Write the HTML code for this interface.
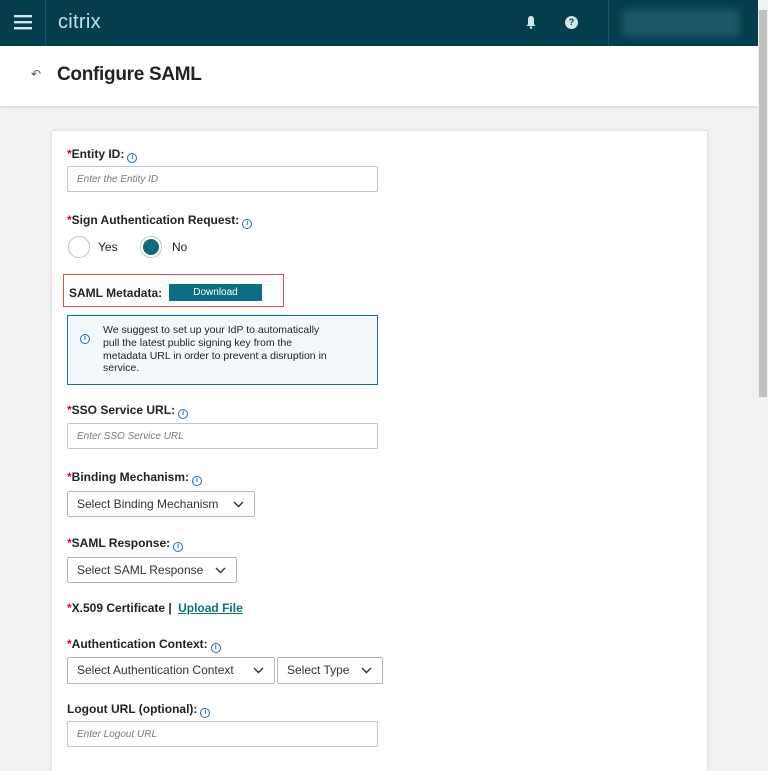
<!DOCTYPE html>
<html><head><meta charset="utf-8"><style>
*{box-sizing:border-box;margin:0;padding:0}
body{width:768px;height:758px;overflow:hidden;background:#f1f1f1;font-family:"Liberation Sans",sans-serif;position:relative;color:#222}
.a{position:absolute}
.hdr{left:0;top:0;width:758px;height:46px;background:#043d4b}
.bar{left:0;top:46px;width:758px;height:61px;background:#fff;border-bottom:1px solid #ddd;box-shadow:0 1px 2px rgba(0,0,0,.08)}
.card{left:52px;top:131px;width:655px;height:640px;background:#fff;box-shadow:0 0 3px rgba(0,0,0,.15)}
.lbl{font-size:12px;font-weight:bold;color:#222;white-space:nowrap;line-height:14px}
.lbl .s{color:#c8102e}
.inp{border:1px solid #c4c4c4;border-radius:2px;background:#fff;font-size:10px;font-style:italic;color:#777;padding-left:9px;line-height:26px}
.sel{border:1px solid #b5b5b5;border-radius:2px;background:#fff;font-size:12px;color:#333;padding-left:9px;line-height:24px;white-space:nowrap}
.sel svg{position:absolute;right:10px;top:9px}
.ii{display:inline-block;width:10px;height:10px;border:1.2px solid #1f6da0;border-radius:50%;vertical-align:-1px;margin-left:3px;font-size:7px;color:#1f6da0;text-align:center;line-height:8px;font-weight:bold;font-style:normal}
.lbl .ii{vertical-align:-1px}
</style></head><body>
<div class="a hdr"></div>
<svg class="a" style="left:14px;top:15px" width="18" height="15"><rect y="0" width="18" height="2.4" fill="#cfe8ec"/><rect y="6" width="18" height="2.4" fill="#cfe8ec"/><rect y="12" width="18" height="2.4" fill="#cfe8ec"/></svg>
<div class="a" style="left:45px;top:0;width:1px;height:46px;background:#1d5563"></div>
<div class="a" style="left:58px;top:11px;font-size:20px;color:#bfe3e8;letter-spacing:0.3px;font-weight:300">citrix</div>
<svg class="a" style="left:525px;top:15px" width="12" height="14"><path d="M6 1C3.5 1 3 3 3 5v4L1.5 11h9L9 9V5C9 3 8.5 1 6 1z" fill="#cfe8ec"/><circle cx="6" cy="12.5" r="1.3" fill="#cfe8ec"/></svg>
<div class="a" style="left:565px;top:16px;width:13px;height:13px;border-radius:50%;background:#cfe8ec;color:#043d4b;font-size:9px;font-weight:bold;text-align:center;line-height:13px">?</div>
<div class="a" style="left:608px;top:0;width:1px;height:46px;background:#1d5563"></div>
<div class="a" style="left:622px;top:9px;width:118px;height:28px;background:#1b5866;filter:blur(4px);border-radius:4px"></div>
<div class="a bar"></div>
<div class="a" style="left:31px;top:67px;font-size:12px;color:#555">↶</div>
<div class="a" style="left:57px;top:64px;font-size:19px;font-weight:bold;color:#222;letter-spacing:-0.3px">Configure SAML</div>
<div class="a" style="left:758px;top:0;width:10px;height:758px;background:#f1f1f1"></div>
<div class="a" style="left:759px;top:10px;width:8px;height:387px;background:#c1c1c1"></div>
<div class="a card"></div>

<div class="a lbl" style="left:67px;top:147px"><span class="s">*</span>Entity ID:<span class="ii">i</span></div>
<div class="a inp" style="left:67px;top:166px;width:311px;height:26px">Enter the Entity ID</div>

<div class="a lbl" style="left:67px;top:213px"><span class="s">*</span>Sign Authentication Request:<span class="ii">i</span></div>
<div class="a" style="left:68px;top:236px;width:22px;height:22px;border:1px solid #c4c4c4;border-radius:50%;background:#fff"></div>
<div class="a" style="left:98px;top:240px;font-size:12px">Yes</div>
<div class="a" style="left:140px;top:236px;width:22px;height:22px;border:1px solid #c4c4c4;border-radius:50%;background:#fff;padding:2px"><div style="width:16px;height:16px;border-radius:50%;background:#0d6b7b"></div></div>
<div class="a" style="left:172px;top:240px;font-size:12px">No</div>

<div class="a" style="left:63px;top:274px;width:221px;height:33px;border:1.5px solid #e0484f"></div>
<div class="a lbl" style="left:69px;top:286px">SAML Metadata:</div>
<div class="a" style="left:169px;top:284px;width:93px;height:17px;background:#0b7083;color:#fff;font-size:10px;text-align:center;line-height:17px">Download</div>

<div class="a" style="left:67px;top:315px;width:311px;height:70px;border:1px solid #1f6da0;background:#f2f9fd"></div>
<div class="a" style="left:80px;top:326px"><span class="ii" style="margin:0">i</span></div>
<div class="a" style="left:103px;top:324px;font-size:10.5px;line-height:12.8px;color:#222;width:270px;white-space:nowrap">We suggest to set up your IdP to automatically<br>pull the latest public signing key from the<br>metadata URL in order to prevent a disruption in<br>service.</div>

<div class="a lbl" style="left:67px;top:403px"><span class="s">*</span>SSO Service URL:<span class="ii">i</span></div>
<div class="a inp" style="left:67px;top:423px;width:311px;height:26px">Enter SSO Service URL</div>

<div class="a lbl" style="left:67px;top:470px"><span class="s">*</span>Binding Mechanism:<span class="ii">i</span></div>
<div class="a sel" style="left:67px;top:491px;width:188px;height:26px">Select Binding Mechanism<svg width="11" height="7"><path d="M1 1l4.5 4.5L10 1" fill="none" stroke="#333" stroke-width="1.4"/></svg></div>

<div class="a lbl" style="left:67px;top:536px"><span class="s">*</span>SAML Response:<span class="ii">i</span></div>
<div class="a sel" style="left:67px;top:557px;width:170px;height:26px">Select SAML Response<svg width="11" height="7"><path d="M1 1l4.5 4.5L10 1" fill="none" stroke="#333" stroke-width="1.4"/></svg></div>

<div class="a lbl" style="left:67px;top:601px"><span class="s">*</span>X.509 Certificate | <span style="color:#0b7083;text-decoration:underline;margin-left:3px">Upload File</span></div>

<div class="a lbl" style="left:67px;top:637px"><span class="s">*</span>Authentication Context:<span class="ii">i</span></div>
<div class="a sel" style="left:67px;top:657px;width:208px;height:27px;line-height:25px">Select Authentication Context<svg width="11" height="7"><path d="M1 1l4.5 4.5L10 1" fill="none" stroke="#333" stroke-width="1.4"/></svg></div>
<div class="a sel" style="left:277px;top:657px;width:106px;height:27px;line-height:25px">Select Type<svg width="11" height="7"><path d="M1 1l4.5 4.5L10 1" fill="none" stroke="#333" stroke-width="1.4"/></svg></div>

<div class="a lbl" style="left:67px;top:702px">Logout URL (optional):<span class="ii">i</span></div>
<div class="a inp" style="left:67px;top:721px;width:311px;height:26px">Enter Logout URL</div>
</body></html>
